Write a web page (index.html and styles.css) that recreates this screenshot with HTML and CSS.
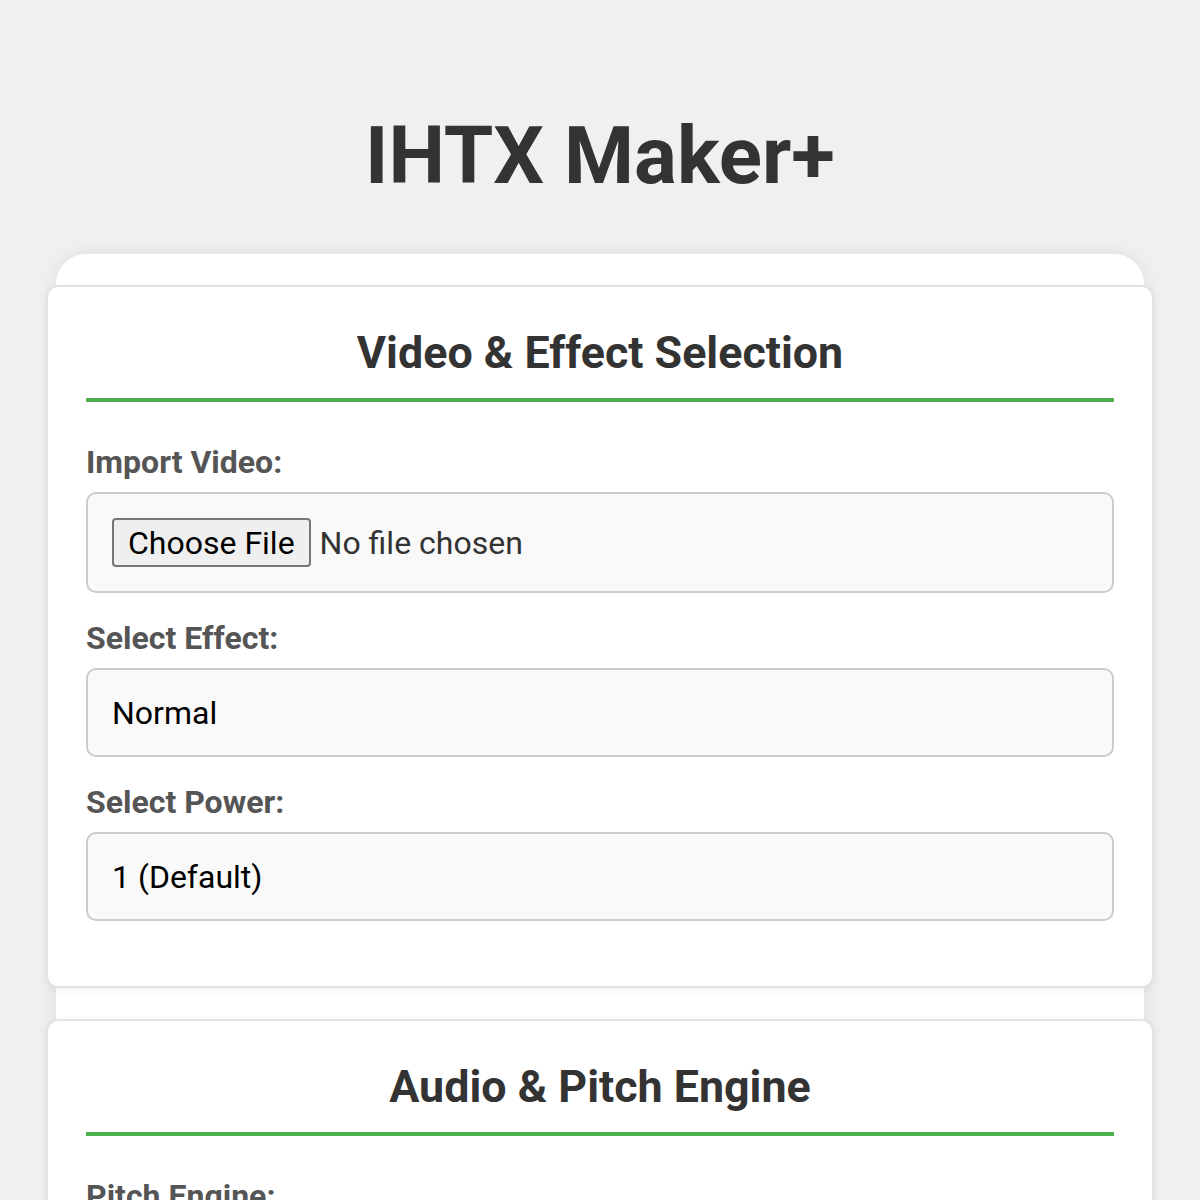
FILE: index.html
```html
<!DOCTYPE html>
<html lang="en">
<head>
<meta charset="utf-8">
<title>IHTX Maker+</title>
<link rel="stylesheet" href="styles.css">
</head>
<body>
  <h1 class="title">IHTX Maker+</h1>
  <main class="container">
    <section class="card">
      <h2 class="card-title">Video &amp; Effect Selection</h2>
      <div class="group">
        <label class="label" for="video">Import Video:</label>
        <div class="file-box">
          <input type="file" id="video" class="file-input" accept="video/*">
        </div>
      </div>
      <div class="group">
        <label class="label" for="effect">Select Effect:</label>
        <select id="effect" class="field">
          <option>Normal</option>
          <option>Reverse</option>
          <option>Mirror</option>
        </select>
      </div>
      <div class="group">
        <label class="label" for="power">Select Power:</label>
        <select id="power" class="field">
          <option>1 (Default)</option>
          <option>2</option>
          <option>3</option>
        </select>
      </div>
    </section>
    <section class="card">
      <h2 class="card-title">Audio &amp; Pitch Engine</h2>
      <div class="group">
        <label class="label" for="pitch">Pitch Engine:</label>
        <select id="pitch" class="field">
          <option>Standard</option>
          <option>Classic</option>
        </select>
      </div>
      <div class="group">
        <label class="label" for="shift">Pitch Shift:</label>
        <select id="shift" class="field">
          <option>0 (None)</option>
          <option>+1</option>
        </select>
      </div>
    </section>
  </main>
</body>
</html>
```
FILE: styles.css
```css
html, body {
  margin: 0;
}
body {
  background: #f0f0f0;
  font-family: Roboto, "Liberation Sans", Arial, sans-serif;
  color: #333;
  padding: 109px 56px 40px;
}
.title {
  margin: 0 0 51px;
  font-size: 80px;
  font-weight: 700;
  line-height: normal;
  text-align: center;
  color: #333;
}
.container {
  background: #fff;
  border-radius: 30px;
  box-shadow: 0 0 20px rgba(0, 0, 0, 0.08);
  padding: 31px 0 30px;
}
.card {
  margin: 0 -10px 31px;
  background: #fff;
  border: 2px solid #e3e3e3;
  border-radius: 12px;
  box-shadow: 0 2px 8px rgba(0, 0, 0, 0.06);
  padding: 39px 38px 39px;
}
.card-title {
  margin: 0 0 41px;
  padding-bottom: 19px;
  border-bottom: 4px solid #4caf50;
  font-size: 44.8px;
  font-weight: 700;
  line-height: normal;
  text-align: center;
  color: #333;
}
.group {
  margin-bottom: 26px;
}
.label {
  display: block;
  margin-bottom: 11px;
  font-size: 32px;
  font-weight: 700;
  line-height: normal;
  color: #555;
}
.file-box,
.field {
  box-sizing: border-box;
  width: 100%;
  background: #f9f9f9;
  border: 2px solid #ccc;
  border-radius: 10px;
  padding: 24px;
  font-family: Roboto, "Liberation Sans", Arial, sans-serif;
  font-size: 32px;
  line-height: normal;
}
.field {
  -webkit-appearance: none;
  appearance: none;
  color: #000;
  display: block;
  height: 89px;
  padding: 0 24px;
}
.file-box {
  height: 101px;
  display: flex;
  align-items: center;
}
.file-input {
  font-family: Roboto, "Liberation Sans", Arial, sans-serif;
  font-size: 32px;
  color: #333;
}
.file-input::file-selector-button {
  font-family: Roboto, "Liberation Sans", Arial, sans-serif;
  font-size: 32px;
  color: #000;
  background: #efefef;
  border: 2px solid #767676;
  border-radius: 4px;
  padding: 4px 14px;
  margin-right: 9px;
  height: 49px;
}
```
